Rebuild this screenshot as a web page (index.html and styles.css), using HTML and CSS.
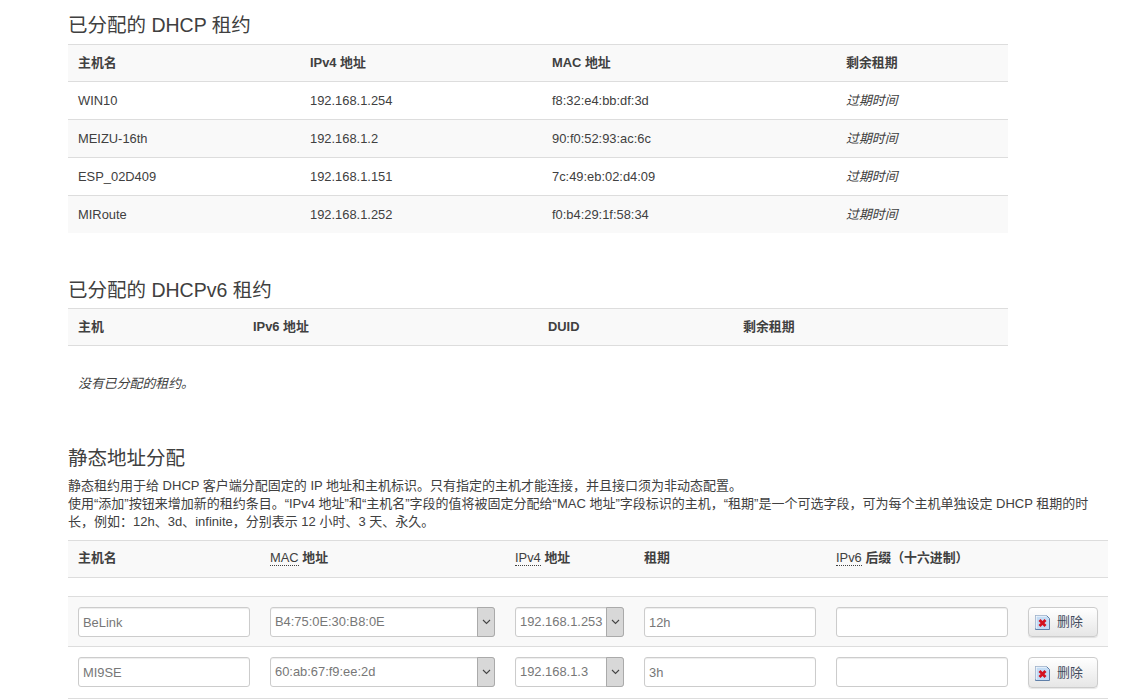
FILE: index.html
```html
<!DOCTYPE html>
<html lang="zh-CN">
<head>
  <meta charset="UTF-8">
  <title>DHCP</title>
  <link rel="stylesheet" href="styles.css">
</head>
<body>
  <div class="content">

    <div class="section">
      <h3>已分配的 DHCP 租约</h3>
      <table class="leases">
        <colgroup>
          <col class="c232"><col class="c242"><col class="c294"><col class="c172">
        </colgroup>
        <tr><th>主机名</th><th>IPv4 地址</th><th>MAC 地址</th><th>剩余租期</th></tr>
        <tr><td>WIN10</td><td>192.168.1.254</td><td>f8:32:e4:bb:df:3d</td><td><em>过期时间</em></td></tr>
        <tr><td>MEIZU-16th</td><td>192.168.1.2</td><td>90:f0:52:93:ac:6c</td><td><em>过期时间</em></td></tr>
        <tr><td>ESP_02D409</td><td>192.168.1.151</td><td>7c:49:eb:02:d4:09</td><td><em>过期时间</em></td></tr>
        <tr><td>MIRoute</td><td>192.168.1.252</td><td>f0:b4:29:1f:58:34</td><td><em>过期时间</em></td></tr>
      </table>
    </div>

    <div class="section">
      <h3 class="tight">已分配的 DHCPv6 租约</h3>
      <table class="leases">
        <colgroup>
          <col class="c175"><col class="c295"><col class="c195"><col class="c275">
        </colgroup>
        <tr><th>主机</th><th>IPv6 地址</th><th>DUID</th><th>剩余租期</th></tr>
      </table>
      <p class="empty"><em>没有已分配的租约。</em></p>
    </div>

    <div class="section">
      <h3>静态地址分配</h3>
      <p class="desc">静态租约用于给 DHCP 客户端分配固定的 IP 地址和主机标识。只有指定的主机才能连接，并且接口须为非动态配置。<br>使用“添加”按钮来增加新的租约条目。“IPv4 地址”和“主机名”字段的值将被固定分配给“MAC 地址”字段标识的主机，“租期”是一个可选字段，可为每个主机单独设定 DHCP 租期的时长，例如：12h、3d、infinite，分别表示 12 小时、3 天、永久。</p>
      <table class="leases static">
        <colgroup>
          <col class="c192"><col class="c245"><col class="c129"><col class="c192"><col class="c192"><col class="c90">
        </colgroup>
        <tr>
          <th>主机名</th>
          <th><abbr>MAC</abbr> 地址</th>
          <th><abbr>IPv4</abbr> 地址</th>
          <th>租期</th>
          <th><abbr>IPv6</abbr> 后缀（十六进制）</th>
          <th></th>
        </tr>
        <tr class="spacer"><td colspan="6"></td></tr>
        <tr class="edit">
          <td><input type="text" value="BeLink"></td>
          <td>
            <div class="combo">
              <select><option>B4:75:0E:30:B8:0E</option></select>
              <span class="arrow"><svg width="9" height="6" viewBox="0 0 9 6"><path d="M1 1l3.5 3.5L8 1" fill="none" stroke="#444" stroke-width="1.1"/></svg></span>
            </div>
          </td>
          <td>
            <div class="combo">
              <select><option>192.168.1.253</option></select>
              <span class="arrow"><svg width="9" height="6" viewBox="0 0 9 6"><path d="M1 1l3.5 3.5L8 1" fill="none" stroke="#444" stroke-width="1.1"/></svg></span>
            </div>
          </td>
          <td><input type="text" value="12h"></td>
          <td><input type="text"></td>
          <td>
            <button class="btn-remove" type="button">
              <svg width="16" height="16" viewBox="0 0 16 16">
                <path d="M.5 1.5h11l3 3v11H.5z" fill="#c4dcf5" stroke="#5f7fa8"/>
                <path d="M.5 1.5h11v1H1.5v12H.5z" fill="#fff"/>
                <path d="M4.5 6l6 6M10.5 6l-6 6" stroke="#d4121f" stroke-width="2.8"/>
              </svg>
              删除
            </button>
          </td>
        </tr>
        <tr class="edit">
          <td><input type="text" value="MI9SE"></td>
          <td>
            <div class="combo">
              <select><option>60:ab:67:f9:ee:2d</option></select>
              <span class="arrow"><svg width="9" height="6" viewBox="0 0 9 6"><path d="M1 1l3.5 3.5L8 1" fill="none" stroke="#444" stroke-width="1.1"/></svg></span>
            </div>
          </td>
          <td>
            <div class="combo">
              <select><option>192.168.1.3</option></select>
              <span class="arrow"><svg width="9" height="6" viewBox="0 0 9 6"><path d="M1 1l3.5 3.5L8 1" fill="none" stroke="#444" stroke-width="1.1"/></svg></span>
            </div>
          </td>
          <td><input type="text" value="3h"></td>
          <td><input type="text"></td>
          <td>
            <button class="btn-remove" type="button">
              <svg width="16" height="16" viewBox="0 0 16 16">
                <path d="M.5 1.5h11l3 3v11H.5z" fill="#c4dcf5" stroke="#5f7fa8"/>
                <path d="M.5 1.5h11v1H1.5v12H.5z" fill="#fff"/>
                <path d="M4.5 6l6 6M10.5 6l-6 6" stroke="#d4121f" stroke-width="2.8"/>
              </svg>
              删除
            </button>
          </td>
        </tr>
      </table>
    </div>

  </div>
</body>
</html>
```

FILE: styles.css
```css
* {
  box-sizing: border-box;
}

body {
  margin: 0;
  background: #fff;
  color: #404040;
  font-family: "Liberation Sans", "Noto Sans CJK SC", sans-serif;
  font-size: 12.9px;
  line-height: 18px;
}

.content {
  width: 1108px;
  padding: 13px 0 0 68px;
}

.section {
  margin-bottom: 45px;
}

.section:last-child {
  margin-bottom: 0;
}

h3 {
  margin: 0 0 7px;
  font-size: 19.5px;
  font-weight: normal;
  line-height: 24px;
  color: #404040;
}

h3.tight {
  margin-bottom: 6px;
}

.leases {
  width: 940px;
  table-layout: fixed;
  border-collapse: separate;
  border-spacing: 0;
  border-top: 1px solid #ddd;
}

.leases.static {
  width: 1040px;
}

.c90 { width: 90px; }
.c129 { width: 129px; }
.c172 { width: 172px; }
.c175 { width: 175px; }
.c192 { width: 192px; }
.c195 { width: 195px; }
.c232 { width: 232px; }
.c242 { width: 242px; }
.c245 { width: 245px; }
.c275 { width: 275px; }
.c294 { width: 294px; }
.c295 { width: 295px; }

th {
  height: 37px;
  padding: 0 10px;
  text-align: left;
  background: #f9f9f9;
  border-bottom: 1px solid #ddd;
}

.static th {
  padding-bottom: 2px;
}

td {
  height: 38px;
  padding: 0 10px;
  border-bottom: 1px solid #ddd;
}

.leases tr:nth-child(odd) td {
  background: #f9f9f9;
}

.leases tr:last-child td {
  height: 37px;
  border-bottom: none;
}

abbr {
  font-weight: normal;
  border-bottom: 1px dotted #404040;
}

.empty {
  margin: 0;
  padding: 29px 10px 8px;
}

.desc {
  margin: 0 0 9px;
  font-size: 13px;
}

.static tr.spacer td {
  height: 19px;
  padding: 0;
  background: #fff;
}

.static tr.edit td {
  height: 50px;
  padding: 10px 10px 9px;
  vertical-align: top;
  border-bottom: 1px solid #ddd;
}

.static tr.edit:nth-child(3) td {
  background: #f9f9f9;
}

.static tr.edit:nth-child(4) td {
  height: 51px;
  padding-bottom: 10px;
  background: #fff;
}

input,
.combo {
  height: 30px;
  border: 1px solid #ccc;
  border-radius: 3px;
  background: #fff;
  box-shadow: inset 0 1px 1px rgba(0, 0, 0, 0.075);
}

input {
  display: block;
  width: 172px;
  padding: 0 4px;
  font: inherit;
  color: #777;
}

.combo {
  display: flex;
  width: 100%;
}

.edit td:nth-child(2) .combo {
  width: 225px;
}

.edit td:nth-child(3) .combo {
  width: 109px;
}

.combo select {
  flex: 1;
  min-width: 0;
  padding: 0 0 0 4px;
  border: none;
  outline: none;
  appearance: none;
  background: transparent;
  font: inherit;
  color: #777;
}

.arrow {
  display: flex;
  align-items: center;
  justify-content: center;
  width: 18px;
  margin: -1px -1px -1px 0;
  background: #d8d8d8;
  border: 1px solid #aaa;
  border-radius: 0 3px 3px 0;
}

.btn-remove {
  display: flex;
  align-items: center;
  gap: 6px;
  width: 70px;
  height: 30px;
  padding: 0 0 0 6px;
  border: 1px solid #ccc;
  border-radius: 4px;
  background: linear-gradient(#fff, #e6e6e6);
  box-shadow: 0 1px 1px rgba(0, 0, 0, 0.1);
  font: inherit;
  color: #404a5c;
}

.edit:nth-child(4) .btn-remove {
  height: 31px;
}
```
